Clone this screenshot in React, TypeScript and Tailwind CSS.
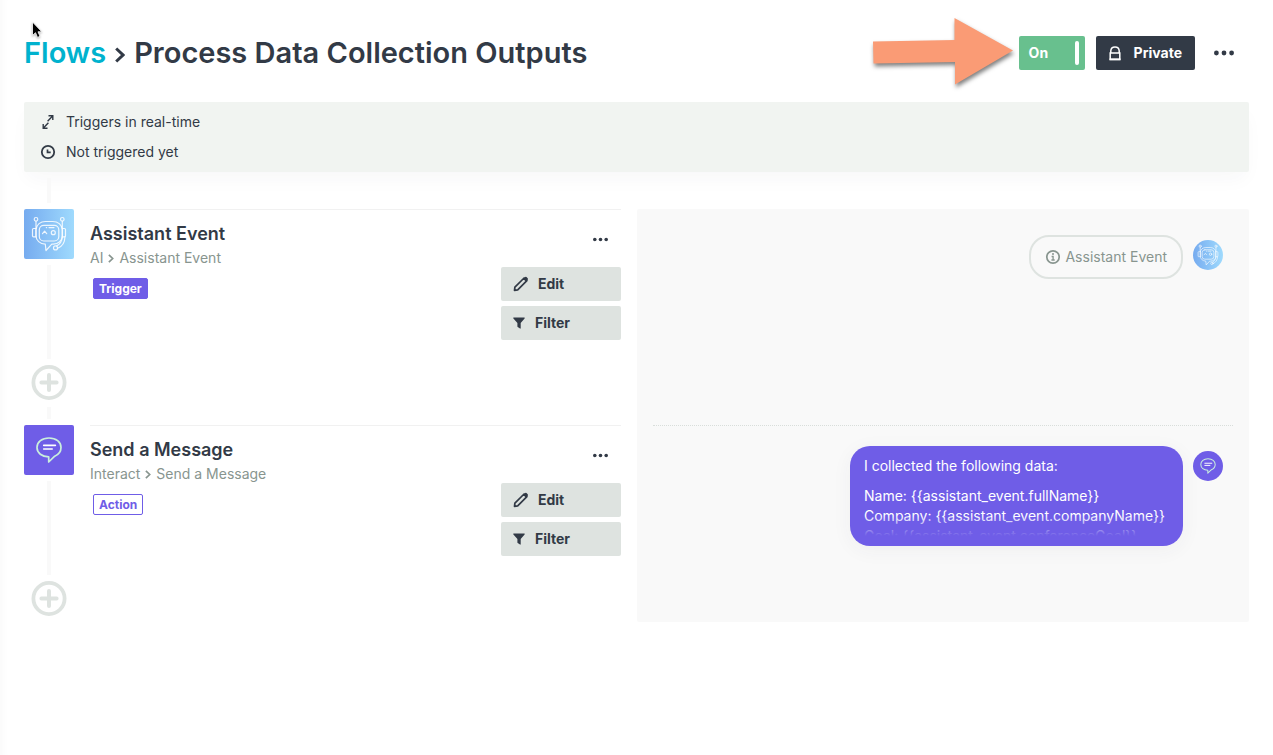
import { useState, type ReactNode } from "react";
import { clsx } from "clsx";

function ChevronIcon({ className }: { className?: string }) {
  return (
    <svg viewBox="0 0 10 16" fill="none" stroke="currentColor" strokeWidth="3" className={className} aria-hidden="true">
      <path d="M1.2 1.5 8 8l-6.800 6.500" />
    </svg>
  );
}

function DotsIcon({ className }: { className?: string }) {
  return (
    <svg viewBox="0 0 20 6" fill="currentColor" className={className} aria-hidden="true">
      <circle cx="2.4" cy="3" r="2.4" />
      <circle cx="10" cy="3" r="2.4" />
      <circle cx="17.6" cy="3" r="2.4" />
    </svg>
  );
}

function LockIcon() {
  return (
    <svg viewBox="0 0 12 15" fill="none" stroke="currentColor" className="h-[15px] w-3" aria-hidden="true">
      <path d="M1.2 7h9.600v6.400H1.200z" strokeWidth="1.500" />
      <path d="M1.800 7V4.700C2 2.300 3.600 1 6 1s4 1.300 4.200 3.700V7" strokeWidth="1.500" />
      <path d="M.5 13.300h11" strokeWidth="1.800" />
    </svg>
  );
}

function RealtimeIcon() {
  return (
    <svg viewBox="0 0 16 16" fill="none" stroke="currentColor" strokeWidth="1.4" className="size-4" aria-hidden="true">
      <path d="M8.500 1.800h4.300v4.300M12.600 2 7.600 7.200" />
      <path d="M3.200 9.900v4.300h4.300M3.400 14l5-5.200" />
    </svg>
  );
}

function ClockIcon() {
  return (
    <svg viewBox="0 0 16 16" fill="none" stroke="currentColor" className="size-4" aria-hidden="true">
      <circle cx="8" cy="8" r="6.2" strokeWidth="1.8" />
      <path d="M7.5 5.400v3h3.200" strokeWidth="1.700" />
    </svg>
  );
}

function PencilIcon() {
  return (
    <svg viewBox="0 0 16 16" fill="none" stroke="currentColor" className="size-4" aria-hidden="true">
      <path d="m1.500 14.300.4-3.200 9.200-9.100 2.800 2.700-9.200 9.200z" strokeWidth="1.700" strokeLinejoin="round" />
      <path d="m10.200 3 1.900-1.900a1 1 0 0 1 1.400 0l1.200 1.200a1 1 0 0 1 0 1.400l-1.900 1.900z" fill="currentColor" stroke="none" />
    </svg>
  );
}

function FilterIcon() {
  return (
    <svg viewBox="0 0 12 12" fill="currentColor" className="size-3" aria-hidden="true">
      <path d="M.9.6h10.200c.6 0 .8.6.5 1L7.700 6v5.200c0 .4-.4.6-.7.4L4.700 9.900a.7.7 0 0 1-.3-.5V6L.4 1.600C.1 1.200.3.6.9.600z" />
    </svg>
  );
}

function InfoIcon() {
  return (
    <svg viewBox="0 0 16 16" fill="none" stroke="currentColor" className="size-4" aria-hidden="true">
      <circle cx="8" cy="8" r="6.200" strokeWidth="1.700" />
      <path d="M6.600 7.500H8.100V11M6.400 11h3.300" strokeWidth="1.300" />
      <circle cx="8" cy="5.100" r="1" fill="currentColor" stroke="none" />
    </svg>
  );
}

function RobotIcon({ className }: { className?: string }) {
  return (
    <svg viewBox="0 0 50 50" fill="none" stroke="#fff" strokeOpacity=".85" strokeWidth="1.200" strokeLinecap="round" strokeLinejoin="round" className={className} aria-hidden="true">
      <circle cx="12" cy="10.300" r="1.800" />
      <circle cx="38.300" cy="10.300" r="1.800" />
      <path d="M12 12.300v7M38.300 12.300v7" />
      <path d="M12 19.500H9.500a1 1 0 0 0-1 1v6.300a1 1 0 0 0 1 1H12zM38.300 19.500h2.200a1 1 0 0 1 1 1v6.300a1 1 0 0 1-1 1h-2.200z" />
      <path d="M12 20.500c.4-5 4.500-8 9.500-8h7.300c5 0 9.100 3 9.500 8v6.200c0 5-4 8.300-9 8.500h-1.500L22 41.500 21.300 35.200C16 35 12 31.500 12 26.700z" />
      <rect x="15.300" y="16.300" width="19.500" height="15.700" rx="4.500" />
      <path d="M25 18.600h5M22.300 18.600h.4" />
      <path d="m18.500 24.700 2.100-2.500 2.100 2.500" />
      <circle cx="29.300" cy="23.700" r="2" />
      <path d="M41 27.800c-.2 5.500-3 9.900-7.300 11.400M38.300 28c-.3 3.800-2.300 7.200-5.600 8.900" />
      <circle cx="31.500" cy="38.900" r="2" />
    </svg>
  );
}

function MessageIcon({ className }: { className?: string }) {
  return (
    <svg viewBox="0 0 50 50" fill="none" strokeLinecap="round" strokeLinejoin="round" className={className} aria-hidden="true">
      <path
        d="M25 13c7 0 12 4 12 9.500 0 4.200-2.700 7.200-6.300 8.700L24.700 37v-5.100C18 31.900 13 28 13 22.500S18 13 25 13z"
        stroke="#c9efdc"
        strokeWidth="1.700"
      />
      <path d="M19.700 20.400h11.700M19.700 24h8.500" stroke="#fff" strokeWidth="1.600" />
    </svg>
  );
}

function PlusCircleIcon() {
  return (
    <svg viewBox="0 0 36 36" fill="none" stroke="currentColor" className="size-9" aria-hidden="true">
      <circle cx="18" cy="17.500" r="15.600" strokeWidth="3.800" />
      <path d="M18 9.900v15.200M10.400 17.500h15.200" strokeWidth="4" strokeLinecap="round" />
    </svg>
  );
}

function PointerArrow() {
  return (
    <svg
      viewBox="0 0 150 80"
      className="pointer-events-none absolute -top-[22px] right-full h-20 w-[150px] drop-shadow-[1px_3px_2px_rgba(0,0,0,0.5)]"
      aria-hidden="true"
    >
      <path d="M4 27.500 85.500 26V4L144 36.500 86 70.500V48L4.500 49.500z" fill="#fa9b75" />
    </svg>
  );
}

function MouseCursor() {
  return (
    <svg viewBox="0 0 14 20" className="pointer-events-none absolute top-5 left-[31px] h-5 w-3.5 drop-shadow-[0_1px_1px_rgba(0,0,0,0.3)]" aria-hidden="true">
      <path d="M1.500 2v13.500l3-2.800 2 4.700 2.500-1.100-2-4.500h3.800z" fill="#000" stroke="#fff" strokeWidth=".8" />
    </svg>
  );
}

function Connector({ className }: { className: string }) {
  return <div className={clsx("w-1 bg-[#f9f9f9]", className)} />;
}

function ActionButton({ icon, label, className }: { icon: ReactNode; label: string; className: string }) {
  return (
    <button type="button" className={clsx("flex h-[34px] w-[120px] items-center rounded-xs bg-[#dee3e0] px-3 text-sm font-bold", className)}>
      {icon}
      {label}
    </button>
  );
}

type StepProps = {
  title: string;
  app: string;
  kind: "Trigger" | "Action";
  icon: ReactNode;
  last?: boolean;
  children: ReactNode;
};

function Step({ title, app, kind, icon, last, children }: StepProps) {
  return (
    <li className="grid grid-cols-[597fr_612fr] gap-4">
      <div className="flex gap-4">
        {/* timeline rail */}
        <div className={clsx("flex w-[50px] shrink-0 flex-col items-center gap-1.5", last ? "pb-[5px]" : "pb-1.5")}>
          {icon}
          <Connector className="h-[94px]" />
          <button type="button" aria-label="Add step" className="text-[#dee3e0]">
            <PlusCircleIcon />
          </button>
          {!last && <Connector className="h-3" />}
        </div>
        <div className="flex min-w-0 flex-1 items-start justify-between border-t border-[#f1f1f1]">
          <div className="pt-3">
            <h2 className="text-lg leading-6 font-semibold">{title}</h2>
            <p className="flex items-center gap-[5px] pt-0.5 text-sm leading-5 text-[#88958f]">
              {app}
              <ChevronIcon className="h-[9px] w-1.5" />
              {title}
            </p>
            <span
              className={clsx(
                "mt-2.5 ml-[3px] inline-block rounded-xs border border-[#6f5de7] px-[5px] text-xs leading-[19px] font-bold",
                kind === "Trigger" ? "bg-[#6f5de7] text-white" : "bg-white text-[#6f5de7]",
              )}
            >
              {kind}
            </span>
          </div>
          <div className="flex flex-col items-end gap-[5px] pt-[18px]">
            <button type="button" aria-label={`${title} options`} className="mr-3 mb-3 flex h-[22px] w-[18px] items-center justify-center">
              <DotsIcon className="h-[5px] w-[15px]" />
            </button>
            <ActionButton icon={<PencilIcon />} label="Edit" className="gap-[9px]" />
            <ActionButton icon={<FilterIcon />} label="Filter" className="gap-2.5" />
          </div>
        </div>
      </div>
      <div className={clsx("bg-[#f9f9f9] px-4", last ? "rounded-b-xs" : "rounded-t-xs")}>{children}</div>
    </li>
  );
}

export default function App() {
  const [on, setOn] = useState(true);

  return (
    <div className="relative min-h-screen bg-white px-6 pt-9 pb-6 font-['Inter',sans-serif] text-[#323a46] shadow-[inset_12px_0_12px_-12px_rgba(0,0,0,0.04)]">
      <MouseCursor />
      <header className="flex h-[34px] items-center justify-between">
        <h1 className="flex items-center gap-[9px] text-[29px] leading-[34px] font-semibold whitespace-nowrap">
          <a href="#flows" className="text-[#00b2ce]">
            Flows
          </a>
          <ChevronIcon className="mt-1 h-4 w-2.5" />
          Process Data Collection Outputs
        </h1>
        <div className="flex items-center gap-[11px] text-sm font-bold text-white">
          <div className="relative">
            <PointerArrow />
            <label className={clsx("flex h-[34px] w-[66px] cursor-pointer items-center justify-between rounded-xs pr-1.5 pl-2.5", on ? "bg-[#68c08e]" : "bg-[#88958f]")}>
              <input type="checkbox" checked={on} onChange={(e) => setOn(e.target.checked)} className="sr-only" />
              {on ? "On" : "Off"}
              <span className="h-6 w-1 rounded-xs bg-white" />
            </label>
          </div>
          <button type="button" className="flex h-[34px] items-center gap-[13px] rounded-xs bg-[#323a46] px-[13px]">
            <LockIcon />
            Private
          </button>
          <button type="button" aria-label="More options" className="flex h-[34px] w-[43px] items-center justify-center pr-2 text-[#323a46]">
            <DotsIcon className="h-1.5 w-5" />
          </button>
        </div>
      </header>

      <main>
        <ul className="mt-8 rounded-xs bg-[#f1f4f1] px-4 py-[5px] text-sm shadow-[0_10px_20px_-4px_rgba(50,58,70,0.04)]">
          <li className="flex h-[30px] items-center gap-2.5">
            <RealtimeIcon />
            Triggers in real-time
          </li>
          <li className="flex h-[30px] items-center gap-2.5">
            <ClockIcon />
            Not triggered yet
          </li>
        </ul>

        <div className="flex w-[50px] justify-center py-1.5">
          <Connector className="h-[25px]" />
        </div>

        <ol>
          <Step
            title="Assistant Event"
            app="AI"
            kind="Trigger"
            icon={
              <div className="size-[50px] rounded-xs bg-linear-to-r from-[#76abef] to-[#9fdafd]">
                <RobotIcon className="size-[50px]" />
              </div>
            }
          >
            <div className="flex items-start justify-end gap-2.5 pt-[26px] pr-2.5">
              <div className="flex h-11 items-center gap-1 rounded-[20px] border-2 border-[#dee3e0] px-3.5 text-sm text-[#88958f]">
                <InfoIcon />
                Assistant Event
              </div>
              <div className="mt-[5px] size-[30px] overflow-hidden rounded-full bg-linear-to-r from-[#76abef] to-[#9fdafd]">
                <RobotIcon className="size-[30px]" />
              </div>
            </div>
          </Step>

          <Step
            title="Send a Message"
            app="Interact"
            kind="Action"
            last
            icon={
              <div className="size-[50px] rounded-xs bg-[#6f5de7]">
                <MessageIcon className="size-[50px]" />
              </div>
            }
          >
            <div className="border-t border-dotted border-[#d9dedb]">
              <div className="flex items-start justify-end gap-2.5 pt-5 pr-2.5">
                <div className="w-[333px] rounded-[20px] bg-[#6f5de7] px-3.5 py-2.5 text-sm leading-5 text-white shadow-[0_4px_20px_rgba(50,58,70,0.05)]">
                  {/* long messages fade out at the bottom of the preview */}
                  <div className="relative h-20 overflow-hidden whitespace-nowrap">
                    <p className="mb-2.5">I collected the following data:</p>
                    <p>Name: {"{{assistant_event.fullName}}"}</p>
                    <p>Company: {"{{assistant_event.companyName}}"}</p>
                    <p>Goal: {"{{assistant_event.conferenceGoal}}"}</p>
                    <div className="absolute inset-x-0 bottom-0 h-5 bg-linear-to-b from-transparent to-[#6f5de7]" />
                  </div>
                </div>
                <div className="mt-[5px] size-[30px] rounded-full bg-[#6f5de7]">
                  <MessageIcon className="size-[30px]" />
                </div>
              </div>
            </div>
          </Step>
        </ol>
      </main>
    </div>
  );
}
